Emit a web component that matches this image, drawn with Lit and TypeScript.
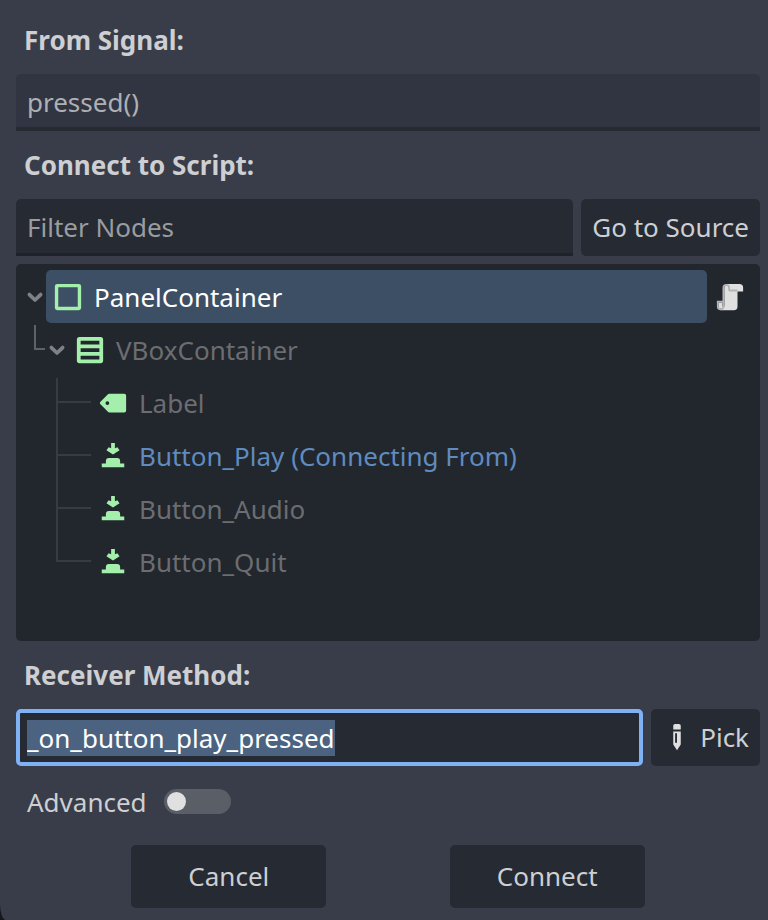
import { LitElement, html, css, svg, nothing } from "lit";
import { customElement, property, query } from "lit/decorators.js";
import { classMap } from "lit/directives/class-map.js";

type IconName = "panel" | "vbox" | "label" | "button" | "script" | "edit" | "chevron";

const SHAPES = {
  panel: svg`<path fill="#a5efac" fill-rule="evenodd" d="M2.300 1A1.300 1.300 0 0 0 1 2.300v11.400A1.300 1.300 0 0 0 2.300 15h11.400a1.300 1.300 0 0 0 1.300-1.300V2.300A1.300 1.300 0 0 0 13.700 1zM2.800 2.800h10.400v10.400H2.800z"/>`,
  vbox: svg`<path fill="#a5efac" fill-rule="evenodd" d="M2.400 1A1.400 1.400 0 0 0 1 2.400v11.200A1.400 1.400 0 0 0 2.400 15h11.200a1.400 1.400 0 0 0 1.400-1.400V2.400A1.400 1.400 0 0 0 13.600 1zM3 3h10v2H3zm0 4h10v2H3zm0 4h10v2H3z"/>`,
  label: svg`<path fill="#a5efac" fill-rule="evenodd" d="M6 3a1 1 0 0 0-.7.3l-4 4a1 1 0 0 0 0 1.4l4 4A1 1 0 0 0 6 13h8a1 1 0 0 0 1-1V4a1 1 0 0 0-1-1zM5 7a1 1 0 0 1 0 2 1 1 0 0 1 0-2z"/>`,
  button: svg`<path fill="#a5efac" d="M7 1v2.900L5.700 3.300 4.500 4.900 8 7.200 11.500 4.900 10.300 3.300 9 3.900V1zM5.800 9a1.600 1.600 0 0 0-1.600 1.600V12H2v2h12v-2h-2.200v-1.400A1.600 1.600 0 0 0 10.200 9z"/>`,
  script: svg`<path fill="#e0e0e0" d="M6 1v1a1 1 0 0 0-1 1v10H4v-2H2v2a1 1 0 0 0 1 1v1h7a2 2 0 0 0 2-2V5h3V3a2 2 0 0 0-2-2z"/><path fill="#b4b4b4" d="M6 1a2 2 0 0 0-2 2v7H1v3a2 2 0 0 0 4 0V3a1 1 0 0 1 2 0v1a1 1 0 0 0 1 1h4V4H8V3a2 2 0 0 0-2-2zM2 11h2v2a1 1 0 0 1-2 0z"/>`,
  edit: svg`<path fill="#e0e0e0" fill-rule="evenodd" d="M7 1a1 1 0 0 0-1 1v2h4V2a1 1 0 0 0-1-1zM6 5v7l2 3 2-3V5zm1 1h1v5H7z"/>`,
  chevron: svg`<path fill="none" stroke="#7e8186" stroke-width="2" stroke-linecap="round" stroke-linejoin="round" d="M5 6.700 8 9.600 11 6.700"/>`,
};

@customElement("editor-icon")
export class EditorIcon extends LitElement {
  @property() name: IconName = "panel";

  static styles = css`
    :host {
      display: block;
      flex: none;
      width: 30px;
      height: 30px;
    }
    .glyph {
      display: block;
      width: 100%;
      height: 100%;
    }
  `;

  render() {
    return html`<svg class="glyph" viewBox="0 0 16 16" aria-hidden="true">${SHAPES[this.name]}</svg>`;
  }
}

interface SceneNode {
  name: string;
  icon: IconName;
  depth: number;
  open?: boolean;
  selected?: boolean;
  source?: boolean;
  last?: boolean;
  first?: boolean;
}

const NODES: SceneNode[] = [
  { name: "PanelContainer", icon: "panel", depth: 0, open: true, selected: true },
  { name: "VBoxContainer", icon: "vbox", depth: 1, open: true, first: true, last: true },
  { name: "Label", icon: "label", depth: 2, first: true },
  { name: "Button_Play (Connecting From)", icon: "button", depth: 2, source: true },
  { name: "Button_Audio", icon: "button", depth: 2 },
  { name: "Button_Quit", icon: "button", depth: 2, last: true },
];

@customElement("app-root")
export class AppRoot extends LitElement {
  @query("#method") private method!: HTMLInputElement;

  static styles = css`
    :host {
      display: block;
      background: #17181c;
      color: #cdcfd2;
      font: 26px/36px "Noto Sans", sans-serif;
    }
    *,
    *::before,
    *::after {
      box-sizing: border-box;
    }
    button,
    input {
      font: inherit;
      color: inherit;
      margin: 0;
      border: 0;
    }
    .dialog {
      display: flex;
      flex-direction: column;
      gap: 8px;
      min-height: 100vh;
      padding: 14px 8px 12px 16px;
      background: #383d49;
      border-radius: 0 0 0 6px / 0 0 0 16px;
    }
    .heading {
      padding: 8px;
      font-weight: 700;
    }
    .row {
      display: flex;
      gap: 8px;
    }
    .field {
      flex: 1;
      min-width: 0;
      height: 57px;
      padding: 2px 11px 0;
      background: #262a33;
      border-bottom: 3px solid #1f2229;
      border-radius: 5px 5px 0 0;
      outline: none;
    }
    .field::placeholder {
      color: #9a9c9f;
      opacity: 1;
    }
    .readonly {
      flex: none;
      color: #aeb0b4;
      background: #303541;
      border-bottom: 4px solid #262a33;
    }
    .method {
      padding: 0 7px;
      line-height: 33px;
      color: #ffffff;
      border: 4px solid #7eb2f5;
      border-radius: 5px;
    }
    .method::selection {
      color: #ffffff;
      background: #4b6380;
    }
    .btn {
      display: flex;
      align-items: center;
      justify-content: center;
      gap: 8px;
      height: 57px;
      padding: 0 11px 1px;
      background: #262a33;
      border-radius: 5px;
      white-space: nowrap;
    }
    .tree {
      flex: 1;
      margin: 0;
      padding: 6px 8px 6px 7px;
      list-style: none;
      background: #22262d;
      border-radius: 5px;
    }
    .node {
      display: flex;
      align-items: center;
      height: 53px;
      color: #6b6d71;
    }
    .guide {
      display: flex;
      flex-direction: column;
      align-self: stretch;
      width: 35px;
      margin-left: 33px;
      color: #383b43;
    }
    .guide.parent {
      width: 11px;
      margin-left: 11px;
      color: #5e6166;
    }
    .guide.first {
      padding-top: 2px;
    }
    .guide::before {
      content: "";
      height: 27px;
      border-left: 2px solid;
      border-bottom: 2px solid;
    }
    .guide.first::before {
      height: 25px;
    }
    .guide::after {
      content: "";
      flex: 1;
      border-left: 2px solid;
    }
    .guide.last::after {
      border-left-color: transparent;
    }
    .fold {
      display: flex;
      justify-content: center;
      width: 23px;
      padding: 0;
      background: none;
    }
    .item {
      display: flex;
      flex: 1;
      align-items: center;
      gap: 11px;
      height: 100%;
      padding: 0 7px;
      border-radius: 5px;
    }
    .selected {
      color: #ffffff;
      background: #3d4f65;
    }
    .source {
      color: #5f8bbf;
    }
    .script {
      padding: 0 7px 0 8px;
      background: none;
    }
    .advanced {
      display: flex;
      align-items: center;
      gap: 17px;
      align-self: flex-start;
      height: 55px;
      padding: 0 11px;
    }
    .switch {
      display: flex;
      align-items: center;
      appearance: none;
      width: 67px;
      height: 25px;
      padding: 0 3px;
      background: #5a5e67;
      border-radius: 13px;
    }
    .switch::before {
      content: "";
      width: 19px;
      height: 19px;
      background: #e0e0e0;
      border-radius: 50%;
    }
    .switch:checked {
      justify-content: flex-end;
      background: #7eb2f5;
    }
    .actions {
      display: flex;
      justify-content: space-evenly;
      gap: 8px;
      padding-top: 8px;
    }
    .action {
      width: 195px;
      height: 63px;
    }
  `;

  firstUpdated() {
    this.method.focus();
    this.method.select();
  }

  private renderNode(node: SceneNode) {
    const guide = {
      guide: true,
      parent: node.depth === 1,
      first: !!node.first,
      last: !!node.last,
    };
    const item = { item: true, selected: !!node.selected, source: !!node.source };
    return html`
      <li class="node" role="treeitem" aria-level=${node.depth + 1} aria-selected=${node.selected ? "true" : "false"}>
        ${node.depth ? html`<span class=${classMap(guide)}></span>` : nothing}
        ${node.open
          ? html`<button class="fold" aria-label="Collapse ${node.name}">
              <editor-icon name="chevron"></editor-icon>
            </button>`
          : nothing}
        <span class=${classMap(item)}>
          <editor-icon name=${node.icon}></editor-icon>
          <span>${node.name}</span>
        </span>
        ${node.selected
          ? html`<button class="script" aria-label="Open Script"><editor-icon name="script"></editor-icon></button>`
          : nothing}
      </li>
    `;
  }

  render() {
    return html`
      <main class="dialog">
        <label class="heading" for="signal">From Signal:</label>
        <input class="field readonly" id="signal" readonly value="pressed()" />

        <label class="heading" for="filter">Connect to Script:</label>
        <div class="row">
          <input class="field" id="filter" placeholder="Filter Nodes" />
          <button class="btn">Go to Source</button>
        </div>
        <ul class="tree" role="tree" aria-label="Scene nodes">
          ${NODES.map((node) => this.renderNode(node))}
        </ul>

        <label class="heading" for="method">Receiver Method:</label>
        <div class="row">
          <input class="field method" id="method" spellcheck="false" value="_on_button_play_pressed" />
          <button class="btn"><editor-icon name="edit"></editor-icon>Pick</button>
        </div>
        <label class="advanced">Advanced <input class="switch" type="checkbox" role="switch" /></label>
        <div class="actions">
          <button class="btn action">Cancel</button>
          <button class="btn action">Connect</button>
        </div>
      </main>
    `;
  }
}
